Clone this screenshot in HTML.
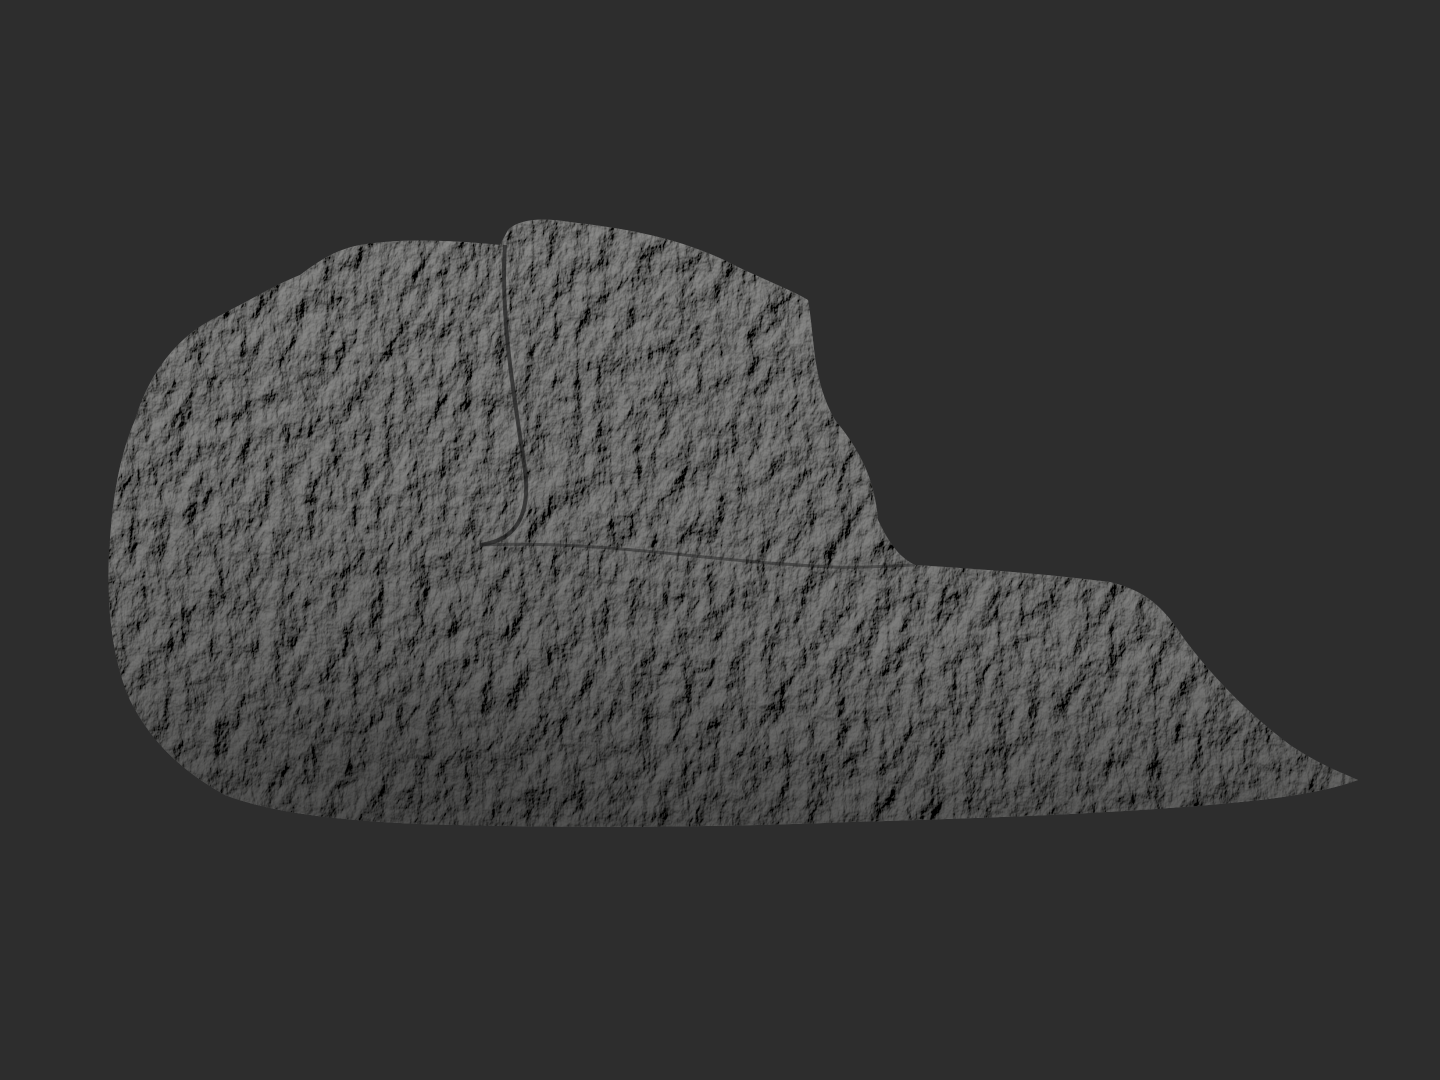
<!DOCTYPE html>
<html><head><meta charset="utf-8"><style>
html,body{margin:0;padding:0;background:#2d2d2d;width:1440px;height:1080px;overflow:hidden}
svg{display:block}
</style></head><body>
<svg width="1440" height="1080" viewBox="0 0 1440 1080" xmlns="http://www.w3.org/2000/svg">
<defs>
<filter id="rock" x="0" y="0" width="100%" height="100%">
<feTurbulence type="fractalNoise" baseFrequency="0.045 0.03" numOctaves="5" seed="7" result="n"/>
<feDiffuseLighting in="n" surfaceScale="5" lighting-color="#c0c0c0" result="l">
<feDistantLight azimuth="225" elevation="42"/>
</feDiffuseLighting>
<feColorMatrix in="l" type="matrix" values="0.7 0 0 0 -0.1  0.7 0 0 0 -0.1  0.69 0 0 0 -0.1  0 0 0 1 0"/>
</filter>
<clipPath id="c">
<path d="M135,420 C150,370 180,335 215,318 C250,300 275,285 300,275 C320,260 335,250 360,245 C400,238 450,240 500,245 L508,230 C520,218 545,218 570,222 C620,228 680,236 740,268 C770,282 795,292 808,300 C815,340 812,380 835,420 C860,450 875,480 878,520 C890,545 900,558 915,565 C960,568 1030,572 1110,582 C1150,592 1165,610 1185,640 C1215,680 1250,715 1290,745 C1320,765 1340,772 1358,780 C1330,790 1300,795 1260,800 C1150,812 1000,818 850,822 C700,828 550,828 420,824 C330,820 270,812 225,795 C180,770 150,740 130,700 C112,660 105,600 110,540 C113,490 122,450 135,420 Z"/>
</clipPath>
<linearGradient id="g" x1="0" y1="0" x2="0" y2="1">
<stop offset="0" stop-color="#000" stop-opacity="0"/>
<stop offset="0.7" stop-color="#000" stop-opacity="0.1"/>
<stop offset="1" stop-color="#000" stop-opacity="0.35"/>
</linearGradient>
<radialGradient id="bl" cx="0.25" cy="0.85" r="0.4">
<stop offset="0" stop-color="#000" stop-opacity="0.2"/>
<stop offset="1" stop-color="#000" stop-opacity="0"/>
</radialGradient>
</defs>
<rect width="1440" height="1080" fill="#2d2d2d"/>
<g clip-path="url(#c)">
<rect x="100" y="210" width="1270" height="630" fill="#606060"/>
<rect x="100" y="210" width="1270" height="630" filter="url(#rock)"/>
<rect x="100" y="210" width="1270" height="630" fill="url(#g)"/>
<rect x="100" y="210" width="1270" height="630" fill="url(#bl)"/>
<path d="M505,245 C500,320 515,400 525,470 C530,510 520,540 480,545" stroke="#1e1e1e" stroke-width="4" fill="none" opacity="0.7"/>
<path d="M480,545 C600,540 700,560 800,565 C850,570 900,565 915,565" stroke="#222" stroke-width="3" fill="none" opacity="0.5"/>
</g>
</svg>
</body></html>
